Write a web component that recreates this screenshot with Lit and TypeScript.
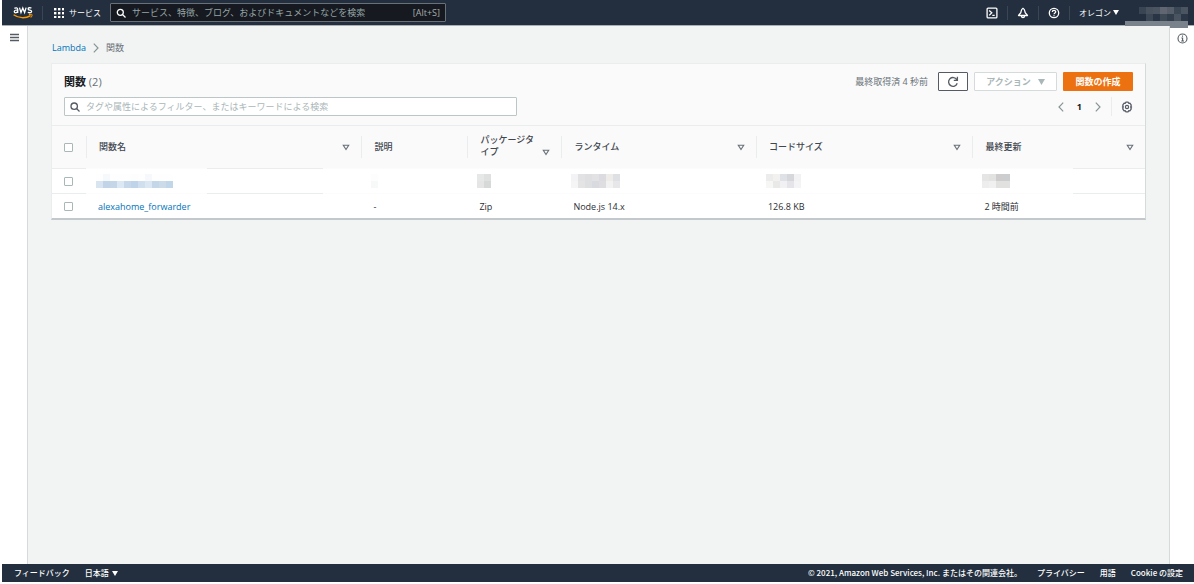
import { LitElement, html, css, svg } from "lit";
import { customElement, property } from "lit/decorators.js";
import { styleMap } from "lit/directives/style-map.js";

const CELL = 7;

/** A mosaic that stands in for a value which must stay private. */
@customElement("masked-value")
class MaskedValue extends LitElement {
  @property({ attribute: false }) rows: string[][] = [];
  static styles = css`
    :host { display: inline-block; vertical-align: middle; }
    svg { display: block; shape-rendering: crispEdges; }
  `;
  render() {
    const w = Math.max(...this.rows.map((r) => r.length)) * CELL;
    const h = this.rows.length * CELL;
    return html`<svg width=${w} height=${h} aria-hidden="true">
      ${this.rows.map((r, y) =>
        r.map((c, x) => svg`<rect x=${x * CELL} y=${y * CELL} width=${CELL} height=${CELL} fill=${c}></rect>`)
      )}
    </svg>`;
  }
}

@customElement("top-nav")
class TopNav extends LitElement {
  static styles = css`
    :host { display: block; font-size: 8px; }
    header {
      display: flex; align-items: center; height: 26px; margin-left: 2px; padding-left: 11px;
      background: #232f3e; color: #fff; border-bottom: 1px solid #a9afb5; box-sizing: border-box;
    }
    svg { display: block; }
    button {
      display: flex; align-items: center; gap: 5px; padding: 0; border: 0; background: none;
      color: #fff; font: inherit; line-height: 14px;
    }
    .logo { display: block; margin-right: 9px; }
    .sep { width: 1px; height: 14px; background: #3b4654; }
    .services { margin: 0 9px 0 11px; }
    .search {
      display: flex; align-items: center; gap: 6px; width: 336px; height: 19px; box-sizing: border-box;
      padding: 0 5px; background: #16191f; border: 1px solid #687078; border-radius: 1px; color: #a5b0b0;
      font-size: 9px;
    }
    .search input {
      flex: 1; min-width: 0; padding: 0; border: 0; outline: 0; background: none; color: #fff; font: inherit;
    }
    .search input::placeholder { color: #95a5a6; opacity: 1; }
    .tools { display: flex; align-items: center; align-self: stretch; margin-left: auto; }
    .tools .icon { width: 30px; justify-content: center; }
    .region { margin: 0 6px 0 9px; gap: 2px; }
    .account {
      width: 63px; height: 28px; margin-right: 6px; align-self: flex-start;
      display: flex; flex-direction: column; justify-content: flex-end;
    }
    .account masked-value { align-self: flex-end; }
    .bar { height: 7px; background: #7a828b; }
  `;
  render() {
    return html`<header>
      <a class="logo" href="#" aria-label="AWS">
        <svg width="20" height="14" viewBox="0 0 20 14" fill="none">
          <g stroke="#fff" stroke-width="1.3">
            <path d="M1.4 2.4C2.6 1.6 4.7 1.7 4.7 3.3V7M4.7 4.2C3 3.8 1.3 4.3 1.3 5.6c0 1.7 2.4 1.5 3.4.1"/>
            <path d="M6.5 1.6 8 6.6 9.8 2l1.8 4.6 1.5-5"/>
            <path d="M18.4 2.1c-1.2-.6-3.3-.6-3.3.8 0 1.7 3.5.9 3.5 2.6 0 1.5-2.3 1.5-3.8.7"/>
          </g>
          <path d="M.6 8.8c5 3.6 12 3.8 17 .8" stroke="#f90" stroke-width="1.4"/>
          <path d="M15.9 8.6c1.5-.4 3-.4 3.2 0 .1.6-.4 2.2-1.2 3" stroke="#f90" stroke-width="1"/>
        </svg>
      </a>
      <span class="sep"></span>
      <button class="services">
        <svg width="10" height="10" viewBox="0 0 10 10" fill="#fff">
          ${[0, 4, 8].map((y) => [0, 4, 8].map((x) => svg`<rect x=${x} y=${y} width="2.4" height="2.4"></rect>`))}
        </svg>
        <span>サービス</span>
      </button>
      <label class="search">
        <svg width="10" height="10" viewBox="0 0 10 10" fill="none" stroke="#fff" stroke-width="1.3">
          <circle cx="4.3" cy="4.3" r="3"/><path d="m6.5 6.5 3 3"/>
        </svg>
        <input type="search" aria-label="検索" placeholder="サービス、特徴、ブログ、およびドキュメントなどを検索" />
        <span>[Alt+S]</span>
      </label>
      <div class="tools">
        <button class="icon" aria-label="CloudShell">
          <svg width="12" height="12" viewBox="0 0 12 12" fill="none" stroke="#fff" stroke-width="1.3">
            <rect x="1.1" y="1.1" width="9.8" height="9.8" rx="1"/><path d="m3.2 3.4 2.6 2.4-2.6 2.6M6.3 8.4h2.4"/>
          </svg>
        </button>
        <span class="sep"></span>
        <button class="icon" aria-label="通知">
          <svg width="12" height="12" viewBox="0 0 12 12" fill="none" stroke="#fff" stroke-width="1.3" stroke-linejoin="round">
            <path d="M6 1.3C4.2 2.3 4.2 4 3.9 5.4 3.6 6.7 2 7.3 1.5 8.5h9C10 7.3 8.4 6.7 8.1 5.4 7.8 4 7.8 2.3 6 1.3Z"/>
            <path d="M4.4 8.6c.2 2.6 3 2.6 3.2 0"/>
          </svg>
        </button>
        <span class="sep"></span>
        <button class="icon" aria-label="ヘルプ">
          <svg width="12" height="12" viewBox="0 0 12 12" fill="none" stroke="#fff" stroke-width="1.3">
            <circle cx="6" cy="6" r="4.7"/><path d="M4.3 5c0-2.2 3.4-2.1 3.4-.2C7.7 6 6 5.9 6 7.3M6 8.2v1.1"/>
          </svg>
        </button>
        <span class="sep"></span>
        <button class="region"><span>オレゴン</span>
          <svg width="6" height="5" viewBox="0 0 6 5" fill="#fff"><path d="M0 0h6L3 5z"/></svg>
        </button>
        <div class="account">
          <masked-value .rows=${[
            ["#3a4553", "#48525f", "#4b5562", "#606772", "#555e69", "#3c4755", "#4b5562"],
            ["#232f3e", "#3c4755", "#293544", "#3e4956", "#333e4d", "#4a5461", "#2b3746"],
          ]}></masked-value>
          <div class="bar"></div>
        </div>
      </div>
    </header>`;
  }
}

@customElement("page-footer")
class PageFooter extends LitElement {
  static styles = css`
    :host { display: block; font-family: "Noto Sans CJK JP", sans-serif; font-size: 8px; font-weight: 500; }
    footer {
      display: flex; align-items: center; gap: 15px; height: 18px; margin: 0 0 2px 2px; padding: 0 11px 0 12px;
      background: #232f3e; color: #fff;
    }
    a { color: inherit; text-decoration: none; }
    button { display: flex; align-items: center; gap: 3px; padding: 0; border: 0; background: none; color: inherit; font: inherit; }
    .copy { margin-left: auto; }
    svg { display: block; }
  `;
  render() {
    return html`<footer>
      <a href="#">フィードバック</a>
      <button>日本語 <svg width="6" height="5" viewBox="0 0 6 5" fill="#fff"><path d="M0 0h6L3 5z"/></svg></button>
      <span class="copy">© 2021, Amazon Web Services, Inc. またはその関連会社。</span>
      <a href="#">プライバシー</a><a href="#">用語</a><a href="#">Cookie の設定</a>
    </footer>`;
  }
}

interface Column { key: string; label: string; width: string; sortable: boolean; }

const COLUMNS: Column[] = [
  { key: "name", label: "関数名", width: "25.2%", sortable: true },
  { key: "description", label: "説明", width: "9.7%", sortable: false },
  { key: "pkg", label: "パッケージタイプ", width: "8.6%", sortable: true },
  { key: "runtime", label: "ランタイム", width: "17.8%", sortable: true },
  { key: "size", label: "コードサイズ", width: "19.8%", sortable: true },
  { key: "updated", label: "最終更新", width: "auto", sortable: true },
];

const MASKS: Record<string, string[][]> = {
  name: [
    ["#fefefe", "#f6f9fb", "#fefefe", "#fefefe", "#fefefe", "#fdfdfe", "#fefefe", "#f6f8fb", "#fefefe", "#fefefe", "#fefefe"],
    ["#d8e4ef", "#c2d5e8", "#c4d6e8", "#dce8f3", "#c6d8ea", "#bfd4e8", "#cfdfee", "#dbe7f2", "#c4d7e9", "#cbdbea", "#c2d6ea"],
  ],
  description: [["#fdfdfd"], ["#f7f9f9"]],
  pkg: [["#e6e7e7", "#dfe0e0"], ["#e5e5e5", "#d7d9d9"]],
  runtime: [
    ["#f3f3f5", "#e2e2e5", "#dfdfe2", "#e2e2e5", "#dcdce0", "#eeebe9", "#dfe0e3"],
    ["#f5f5f6", "#e4e4e5", "#dedfe1", "#d9d9e0", "#dedee0", "#f2f2f3", "#e7e7ea"],
  ],
  size: [
    ["#ececec", "#f2f1ef", "#dee2e6", "#d6d7db", "#f2f2f5"],
    ["#f6f6f5", "#e9e9e8", "#f1f1f3", "#e5e5e9", "#f4f4f6"],
  ],
  updated: [
    ["#e5e5e5", "#e2e2e1", "#cecccc", "#cccdce"],
    ["#ededee", "#f0f0f0", "#e1e1df", "#e1e1e0"],
  ],
};

@customElement("function-table")
class FunctionTable extends LitElement {
  static styles = css`
    :host { display: block; }
    table { width: 100%; table-layout: fixed; border-collapse: separate; border-spacing: 0; }
    .pick { width: 34px; }
    th {
      height: 42px; padding: 0; background: #fafafa; border-top: 1px solid #eaeded;
      text-align: left; font-weight: 500; color: #414750;
    }
    .head { display: flex; align-items: center; height: 22px; padding: 0 11px 0 12px; border-left: 1px solid #eaeded; }
    .head.tall { align-items: flex-end; }
    .head span { flex: 1; line-height: 12px; }
    .head button { padding: 0; border: 0; background: none; }
    .head svg { display: block; margin: 2px 0; }
    td {
      box-sizing: border-box; height: 25px; padding: 2px 0 0 12px; border-top: 1px solid #fcfcfc; line-height: 14px;
      white-space: nowrap; color: #2a2e33;
    }
    td.tick { border-top-color: #eaeded; }
    td.name { border-image: linear-gradient(90deg, #fcfcfc 44%, #eaeded 44% 86%, #fcfcfc 86%) 1; }
    td.updated { border-image: linear-gradient(90deg, #fcfcfc 58%, #eaeded 58%) 1; }
    .tick { padding: 0 0 0 12px; }
    .masked td { vertical-align: top; padding-left: 10px; }
    .masked td.tick { vertical-align: middle; padding-left: 12px; }
    input {
      appearance: none; display: block; width: 9px; height: 9px; margin: 0; box-sizing: border-box;
      border: 1px solid #aab7b8; border-radius: 1px; background: #fff;
    }
    masked-value { display: block; margin-top: 3px; }
    a { color: #0073bb; text-decoration: none; }
  `;
  private cells: Record<string, unknown> = {
    name: html`<a href="#">alexahome_forwarder</a>`,
    description: "-", pkg: "Zip", runtime: "Node.js 14.x", size: "126.8 KB", updated: "2 時間前",
  };
  render() {
    return html`<table>
      <colgroup>
        <col class="pick" />
        ${COLUMNS.map((c) => html`<col style=${styleMap({ width: c.width })} />`)}
      </colgroup>
      <thead><tr>
        <th class="tick"><input type="checkbox" aria-label="すべて選択" /></th>
        ${COLUMNS.map((c) => html`<th scope="col"><div class="head ${c.key === "pkg" ? "tall" : ""}">
          <span>${c.label}</span>
          ${c.sortable ? html`<button aria-label="並べ替え"><svg width="8" height="7" viewBox="0 0 8 7" fill="none" stroke="#687078" stroke-width="1.1"><path d="M1.3 1.3h5.4L4 5.5z"/></svg></button>` : ""}
        </div></th>`)}
      </tr></thead>
      <tbody>
        <tr class="masked">
          <td class="tick"><input type="checkbox" aria-label="関数を選択" /></td>
          ${COLUMNS.map((c) => html`<td class=${c.key}><masked-value .rows=${MASKS[c.key]}></masked-value></td>`)}
        </tr>
        <tr>
          <td class="tick"><input type="checkbox" aria-label="alexahome_forwarder を選択" /></td>
          ${COLUMNS.map((c) => html`<td class=${c.key}>${this.cells[c.key]}</td>`)}
        </tr>
      </tbody>
    </table>`;
  }
}

@customElement("app-root")
class AppRoot extends LitElement {
  static styles = css`
    :host {
      display: flex; flex-direction: column; min-height: 100vh; background: #fff; color: #16191f;
      font: 9px/14px "Open Sans", "Noto Sans CJK JP", sans-serif;
    }
    svg { display: block; }
    a { color: #0073bb; text-decoration: none; }
    button { font: inherit; padding: 0; border: 0; background: none; color: inherit; }
    .body { flex: 1; display: flex; margin-left: 2px; }
    .rail { width: 24px; flex: none; display: flex; justify-content: center; align-items: flex-start; padding-top: 7px; }
    .rail.left { width: 25px; border-right: 1px solid #d5dbdb; }
    .rail.right { border-left: 1px solid #d5dbdb; }
    main { flex: 1; min-width: 0; padding: 15px 24px; background: #f2f3f3; }
    nav { display: flex; align-items: center; gap: 7px; color: #687078; margin-bottom: 8px; }
    .card {
      background: #fff; border: 1px solid #eaeded; border-bottom: 2px solid #c3c8cc;
      border-right-color: #d5dbdb; margin: 0 -1px;
    }
    .top { background: #fafafa; padding: 8px 12px 9px; display: flex; flex-direction: column; gap: 6px; }
    .line { display: flex; align-items: center; }
    h1 { margin: 0 auto 0 0; font-size: 11px; line-height: 19px; font-weight: 700; }
    h1 span { font-weight: 400; color: #687078; }
    .stamp { color: #687078; margin-right: 10px; }
    .btn { display: flex; align-items: center; justify-content: center; height: 19px; box-sizing: border-box; border-radius: 1px; }
    .refresh { width: 30px; border: 1px solid #545b64; background: #fff; margin-right: 6px; }
    .actions {
      width: 83px; gap: 7px; border: 1px solid #d5dbdb; background: #fff; color: #aab7b8;
      margin-right: 6px; font-weight: 700;
    }
    .create { width: 70px; background: #ec7211; color: #fff; font-weight: 700; }
    .filter {
      display: flex; align-items: center; gap: 6px; width: 42.4%; height: 19px; box-sizing: border-box;
      padding: 0 5px; border: 1px solid #bcc6c7; border-radius: 1px; background: #fff;
    }
    .filter input { flex: 1; min-width: 0; padding: 0; border: 0; outline: 0; background: none; font: inherit; }
    .filter input::placeholder { color: #aab7b8; opacity: 1; }
    .pager, .pages { display: flex; align-items: center; font-weight: 700; }
    .pager { gap: 10px; margin-left: auto; }
    .pages { gap: 13px; }
    .gear { padding-left: 9px; border-left: 1px solid #eaeded; height: 19px; display: flex; align-items: center; }
  `;
  private chevron(d: string, color: string) {
    return html`<svg width="6" height="10" viewBox="0 0 6 10" fill="none" stroke=${color} stroke-width="1.2"><path d=${d}></path></svg>`;
  }
  render() {
    return html`
      <top-nav></top-nav>
      <div class="body">
        <div class="rail left"><button aria-label="メニュー">
          <svg width="10" height="9" viewBox="0 0 10 9" stroke="#545b64" stroke-width="1.3"><path d="M0 1.5h9M0 4.5h9M0 7.5h9"/></svg>
        </button></div>
        <main>
          <nav><a href="#">Lambda</a>${this.chevron("M.8.6 5 5 .8 9.4", "#879596")}<span>関数</span></nav>
          <section class="card">
            <div class="top">
              <div class="line">
                <h1>関数 <span>(2)</span></h1>
                <span class="stamp">最終取得済 4 秒前</span>
                <button class="btn refresh" aria-label="更新">
                  <svg width="12" height="12" viewBox="0 0 12 12" fill="none" stroke="#545b64" stroke-width="1.3"><path d="M10.2 7.2A4.4 4.4 0 1 1 9.8 3.7M10.4.8v3.6H6.8"/></svg>
                </button>
                <button class="btn actions" disabled>アクション
                  <svg width="7" height="6" viewBox="0 0 7 6" fill="#aab7b8"><path d="M0 0h7L3.5 6z"/></svg>
                </button>
                <button class="btn create">関数の作成</button>
              </div>
              <div class="line">
                <label class="filter">
                  <svg width="10" height="10" viewBox="0 0 10 10" fill="none" stroke="#545b64" stroke-width="1.3"><circle cx="4.2" cy="4.2" r="3.2"/><path d="m6.5 6.5 3 3"/></svg>
                  <input type="text" aria-label="関数をフィルター" placeholder="タグや属性によるフィルター、またはキーワードによる検索" />
                </label>
                <div class="pager">
                  <div class="pages">
                    <button aria-label="前へ">${this.chevron("M5.2.6 1 5l4.2 4.4", "#879596")}</button>
                    <span>1</span>
                    <button aria-label="次へ">${this.chevron("M.8.6 5 5 .8 9.4", "#879596")}</button>
                  </div>
                  <div class="gear"><button aria-label="設定">
                    <svg width="12" height="12" viewBox="0 0 12 12" fill="none" stroke="#545b64">
                      <path stroke-width="1.2" stroke-linejoin="round" d="M4.8 1.2h2.4l.5 1.1 1.2-.2 1.4 2-.6 1.1.9.8-.9.8.6 1.1-1.4 2-1.2-.2-.5 1.1H4.8l-.5-1.1-1.2.2-1.4-2 .6-1.1-.9-.8.9-.8-.6-1.1 1.4-2 1.2.2z"/>
                      <circle cx="6" cy="6" r="1.6" stroke-width="1.2"/>
                    </svg>
                  </button></div>
                </div>
              </div>
            </div>
            <function-table></function-table>
          </section>
        </main>
        <div class="rail right"><button aria-label="情報">
          <svg width="11" height="11" viewBox="0 0 11 11" fill="none" stroke="#545b64" stroke-width="1.1"><circle cx="5.5" cy="5.5" r="4.5"/><path d="M5.5 2.5v1.2M4.4 5h1.2v3M4.2 8h2.8"/></svg>
        </button></div>
      </div>
      <page-footer></page-footer>
    `;
  }
}
